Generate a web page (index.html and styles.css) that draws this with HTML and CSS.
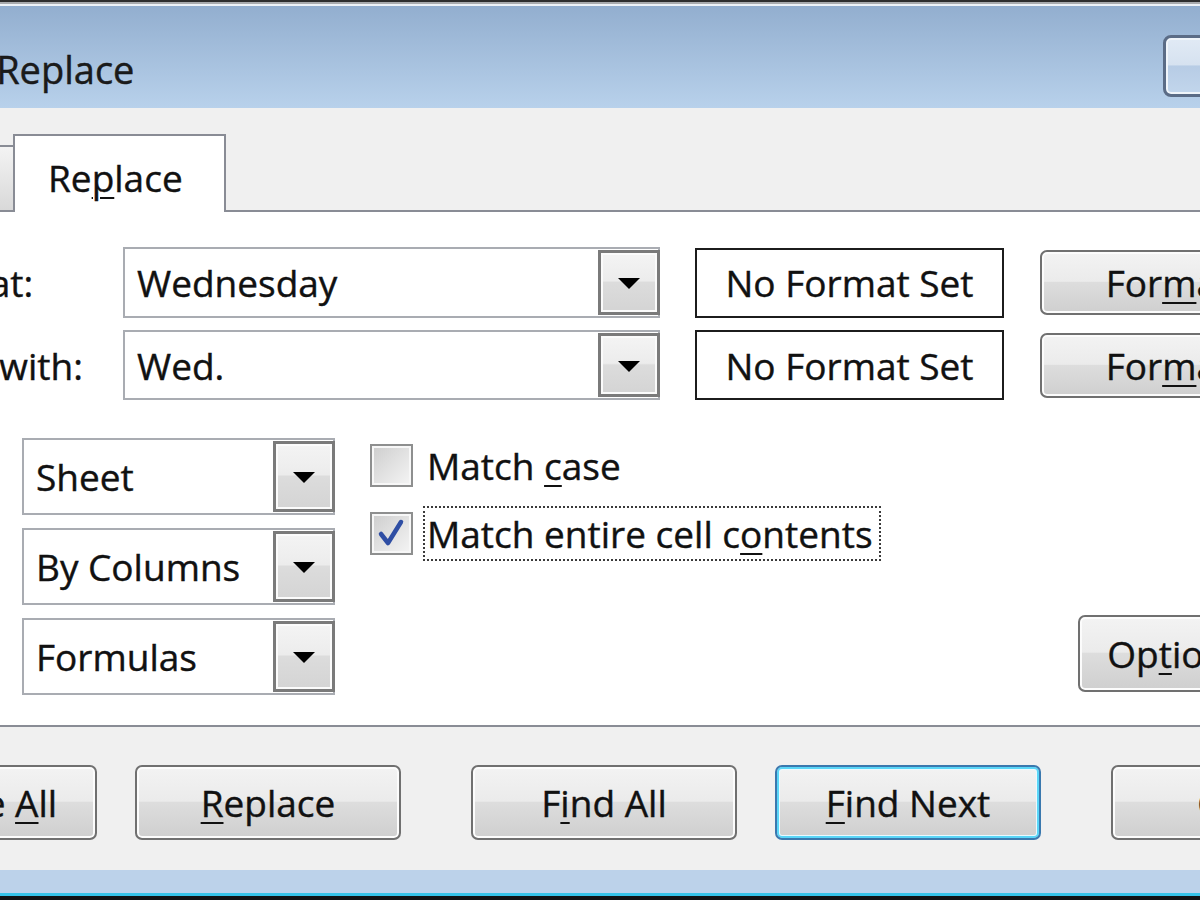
FILE: index.html
```html
<!DOCTYPE html>
<html lang="en">

<head>
    <meta charset="UTF-8">
    <meta name="viewport" content="width=device-width, initial-scale=1.0">
    <title>Find and Replace</title>
    <link rel="stylesheet" href="styles.css">
</head>

<body>
    <div class="window">
        <div class="titlebar">
            <span class="title">Find and Replace</span>
            <div class="winbtn"></div>
        </div>

        <div class="client">
            <div class="tabs">
                <div class="tab find">Fin<u>d</u></div>
                <div class="tab active">Re<u>p</u>lace</div>
                <div class="tab-rest"></div>
            </div>

            <div class="panel">
                <div class="row">
                    <label class="lbl">Fi<u>n</u>d what:</label>
                    <div class="combo">
                        <span class="val">Wednesday</span>
                        <span class="drop"></span>
                    </div>
                    <div class="fmt">No Format Set</div>
                    <button class="btn format">For<u>m</u>at...</button>
                </div>
                <div class="row second">
                    <label class="lbl">R<u>e</u>place with:</label>
                    <div class="combo">
                        <span class="val">Wed.</span>
                        <span class="drop"></span>
                    </div>
                    <div class="fmt">No Format Set</div>
                    <button class="btn format">For<u>m</u>at...</button>
                </div>

                <div class="opts">
                    <div class="selects">
                        <div class="combo small">
                            <span class="val">Sheet</span>
                            <span class="drop"></span>
                        </div>
                        <div class="combo small">
                            <span class="val">By Columns</span>
                            <span class="drop"></span>
                        </div>
                        <div class="combo small">
                            <span class="val">Formulas</span>
                            <span class="drop"></span>
                        </div>
                    </div>

                    <div class="checks">
                        <div class="chk">
                            <span class="box"></span>
                            <span class="chk-label">Match <u>c</u>ase</span>
                        </div>
                        <div class="chk">
                            <span class="box">
                                <svg viewBox="0 0 43 43" width="43" height="43">
                                    <path d="M11 22 L18 31 L31 10" fill="none" stroke="#2f4ea4" stroke-width="4.5" stroke-linecap="round" stroke-linejoin="round" />
                                </svg>
                            </span>
                            <span class="chk-label focus">Match entire cell c<u>o</u>ntents</span>
                        </div>
                    </div>

                    <button class="btn options">Op<u>t</u>ions &lt;&lt;</button>
                </div>
            </div>

            <div class="actions">
                <button class="btn act">Replace <u>A</u>ll</button>
                <button class="btn act near"><u>R</u>eplace</button>
                <button class="btn act far">F<u>i</u>nd All</button>
                <button class="btn act near default"><u>F</u>ind Next</button>
                <button class="btn act far">Close</button>
            </div>
        </div>

        <div class="frame-bottom"></div>
        <div class="frame-edge"></div>
    </div>
</body>

</html>
```

FILE: styles.css
```css
html,
body {
    margin: 0;
    padding: 0;
}

body {
    overflow: hidden;
    background: #f0f0f0;
    font-family: "Open Sans", "Noto Sans", sans-serif;
    font-size: 37px;
    color: #111;
    -webkit-text-stroke: 0.4px #111;
}

u {
    text-decoration-thickness: 2px;
    text-underline-offset: 5px;
}

/* the dialog is bigger than the shot, its left part is cut off */
.window {
    margin-left: -200px;
    width: 1600px;
}

.titlebar {
    height: 108px;
    box-sizing: border-box;
    border-top: 2px solid #2e2e2e;
    box-shadow: inset 0 2px #a9abae, inset 0 4px #eef3f8;
    background: linear-gradient(#91adce, #b8d1eb);
    display: flex;
    align-items: flex-start;
    padding-left: 33px;
}

.title {
    margin-top: 42px;
    line-height: 50px;
    font-size: 38px;
    color: #1b1b1b;
}

.winbtn {
    margin-left: auto;
    margin-right: 147px;
    margin-top: 33px;
    width: 90px;
    height: 62px;
    box-sizing: border-box;
    border: 3px solid #5b6c86;
    border-radius: 8px;
    background: linear-gradient(#e1eaf5 0, #d6e2f0 48%, #b7cce5 50%, #c2d6ec 100%);
    box-shadow: inset 0 0 0 2px #f0f5fa;
}

.client {
    background: #f0f0f0;
    padding-top: 26px;
}

/* tabs */
.tabs {
    margin-left: 35px;
    width: 1500px;
    height: 78px;
    display: flex;
    align-items: flex-end;
}

.tab {
    box-sizing: border-box;
    display: flex;
    align-items: center;
}

.tab.find {
    width: 178px;
    height: 67px;
    padding-left: 50px;
    border: 2px solid #898c95;
    border-right: none;
    background: linear-gradient(#f3f3f3, #d9d9d9);
}

.tab.active {
    width: 213px;
    height: 78px;
    padding: 6px 0 0 33px;
    border: 2px solid #898c95;
    border-bottom: none;
    background: #fff;
}

.tab-rest {
    flex: 1;
    border-bottom: 2px solid #898c95;
}

/* panel */
.panel {
    margin-left: 35px;
    width: 1500px;
    height: 515px;
    box-sizing: border-box;
    padding: 35px 8px 0 18px;
    background: #fff;
    border: 2px solid #898c95;
    border-top: none;
}

.row {
    display: flex;
    align-items: center;
    height: 71px;
}

.row.second {
    margin-top: 12px;
    height: 70px;
}

.lbl {
    width: 268px;
    flex: none;
}

.combo {
    display: flex;
    width: 537px;
    height: 100%;
    box-sizing: border-box;
    border: 2px solid #a9acb2;
    background: #fff;
    flex: none;
}

.combo .val {
    flex: 1;
    padding-left: 12px;
    display: flex;
    align-items: center;
}

.drop {
    width: 62px;
    margin: 1px -2px 1px 0;
    box-sizing: border-box;
    border: 3px solid #7a7a7a;
    box-shadow: inset 0 0 0 2px #fbfbfb;
    background: linear-gradient(#f4f4f4 0, #ececec 47%, #dcdcdc 50%, #d4d4d4 100%);
    display: flex;
    align-items: center;
    justify-content: center;
}

.drop::after {
    content: "";
    border-left: 11px solid transparent;
    border-right: 11px solid transparent;
    border-top: 11px solid #000;
    margin-top: 2px;
}

.fmt {
    margin-left: 35px;
    width: 309px;
    height: 70px;
    box-sizing: border-box;
    border: 2px solid #1c1c1c;
    background: #fff;
    display: flex;
    align-items: center;
    justify-content: center;
    flex: none;
}

.btn {
    font: inherit;
    color: inherit;
    box-sizing: border-box;
    padding: 0;
    border: 2px solid #707070;
    border-radius: 7px;
    background: linear-gradient(#f3f3f3 0, #ebebeb 48%, #dddddd 50%, #cfcfcf 100%);
    box-shadow: inset 0 0 0 2px #fcfcfc;
    flex: none;
}

.btn.format {
    margin-left: 36px;
    width: 285px;
    height: 65px;
}

/* options part */
.opts {
    display: flex;
    margin-top: 38px;
}

.selects {
    margin-left: 167px;
    display: flex;
    flex-direction: column;
    gap: 13px;
}

.combo.small {
    width: 313px;
    height: 77px;
}

.checks {
    margin-left: 35px;
    display: flex;
    flex-direction: column;
    gap: 13px;
}

.chk {
    height: 55px;
    display: flex;
    align-items: center;
}

.box {
    width: 43px;
    height: 43px;
    box-sizing: border-box;
    border: 2px solid #8e8f8f;
    box-shadow: inset 0 0 0 2px #f7f7f7;
    background: linear-gradient(135deg, #cdcdcd, #f5f5f5);
    position: relative;
    flex: none;
}

.box svg {
    position: absolute;
    left: -2px;
    top: -2px;
}

.chk-label {
    margin-left: 14px;
}

.chk-label.focus {
    margin-left: 10px;
    height: 55px;
    box-sizing: border-box;
    padding: 0 6px 0 2px;
    border: 2px dotted #3a3a3a;
    display: flex;
    align-items: center;
}

.btn.options {
    margin-left: auto;
    align-self: flex-end;
    margin-bottom: 3px;
    width: 247px;
    height: 77px;
}

/* bottom buttons */
.actions {
    display: flex;
    height: 143px;
    box-sizing: border-box;
    padding: 38px 0 30px 31px;
}

.btn.act {
    width: 266px;
    height: 75px;
}

.btn.act.near {
    margin-left: 38px;
}

.btn.act.far {
    margin-left: 70px;
}

.btn.default {
    border-color: #3a78ae;
    box-shadow: inset 0 0 0 2px #5ad6f8, inset 0 0 0 3px #eafaff;
}

.frame-bottom {
    height: 23px;
    background: #bcd2ea;
    border-bottom: 3px solid #35c2e7;
}

.frame-edge {
    height: 20px;
    background: #111;
}
```
